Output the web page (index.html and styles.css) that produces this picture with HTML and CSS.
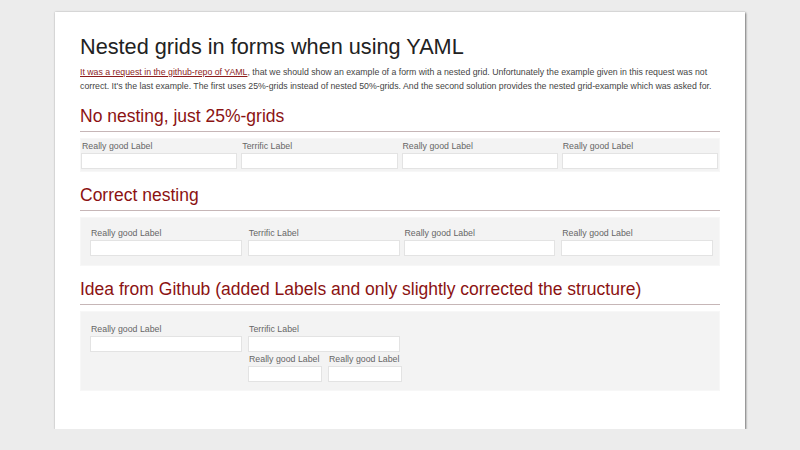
FILE: index.html
```html
<!DOCTYPE html>
<html lang="en">
<head>
<meta charset="utf-8">
<title>Nested grids in forms when using YAML</title>
<link rel="stylesheet" href="styles.css">
</head>
<body>
<div class="page">
  <h1 class="title">Nested grids in forms when using YAML</h1>
  <p class="intro"><a class="intro-link" href="#">It was a request in the github-repo of YAML</a>, that we should show an example of a form with a nested grid. Unfortunately the example given in this request was not correct. It's the last example. The first uses 25%-grids instead of nested 50%-grids. And the second solution provides the nested grid-example which was asked for.</p>

  <h2 class="section-title">No nesting, just 25%-grids</h2>
  <form class="box box-flat">
    <div class="grid-four">
      <div class="field"><label class="field-label" for="a1">Really good Label</label><input class="field-input" id="a1" type="text"></div>
      <div class="field"><label class="field-label" for="a2">Terrific Label</label><input class="field-input" id="a2" type="text"></div>
      <div class="field"><label class="field-label" for="a3">Really good Label</label><input class="field-input" id="a3" type="text"></div>
      <div class="field"><label class="field-label" for="a4">Really good Label</label><input class="field-input" id="a4" type="text"></div>
    </div>
  </form>

  <h2 class="section-title">Correct nesting</h2>
  <form class="box box-nested">
    <div class="grid-halves">
      <div class="grid-inner">
        <div class="field"><label class="field-label" for="b1">Really good Label</label><input class="field-input" id="b1" type="text"></div>
        <div class="field"><label class="field-label" for="b2">Terrific Label</label><input class="field-input" id="b2" type="text"></div>
      </div>
      <div class="grid-inner">
        <div class="field"><label class="field-label" for="b3">Really good Label</label><input class="field-input" id="b3" type="text"></div>
        <div class="field"><label class="field-label" for="b4">Really good Label</label><input class="field-input" id="b4" type="text"></div>
      </div>
    </div>
  </form>

  <h2 class="section-title">Idea from Github (added Labels and only slightly corrected the structure)</h2>
  <form class="box box-idea">
    <div class="grid-idea">
      <div class="field"><label class="field-label" for="c1">Really good Label</label><input class="field-input" id="c1" type="text"></div>
      <div class="field">
        <label class="field-label" for="c2">Terrific Label</label><input class="field-input field-input-wide" id="c2" type="text">
        <div class="grid-sub">
          <div class="field"><label class="field-label" for="c3">Really good Label</label><input class="field-input" id="c3" type="text"></div>
          <div class="field"><label class="field-label" for="c4">Really good Label</label><input class="field-input" id="c4" type="text"></div>
        </div>
      </div>
    </div>
  </form>
</div>
</body>
</html>
```
FILE: styles.css
```css
html, body {
  margin: 0;
  padding: 0;
}

body {
  background: #ececec;
  font-family: "Liberation Sans", Arial, sans-serif;
  color: #444;
}

.page {
  width: 640px;
  margin: 12px auto 0;
  padding: 22px 25px 38px;
  background: #fff;
  box-shadow: 1px 1px 2px rgba(0, 0, 0, 0.45), 0 0 2px rgba(0, 0, 0, 0.2);
}

.title {
  margin: 0;
  font-size: 21.7px;
  line-height: 26px;
  font-weight: normal;
  color: #222;
}

.intro {
  margin: 4.75px 0 0;
  font-size: 8.76px;
  line-height: 14px;
  color: #444;
}

.intro-link {
  color: #8c1d1d;
  text-decoration: underline;
}

.section-title {
  margin: 12.5px 0 6px;
  padding-bottom: 3.5px;
  border-bottom: 1px solid #c6b6b7;
  font-size: 17.5px;
  line-height: 22px;
  font-weight: normal;
  color: #8b1212;
}

.box {
  margin: 0;
  background: #f3f3f3;
  border: 1px solid #f7f7f7;
}

.box-flat {
  padding: 0 1px 2px 0;
}

.box-nested {
  padding: 8px 6px 9px 9px;
}

.box-idea {
  padding: 10px 6px 8px 9px;
}

.grid-four {
  display: grid;
  grid-template-columns: repeat(4, 1fr);
  column-gap: 4px;
}

.grid-halves {
  display: grid;
  grid-template-columns: 1fr 1fr;
  column-gap: 4px;
}

.grid-inner {
  display: grid;
  grid-template-columns: 1fr 1fr;
  column-gap: 6px;
}

.grid-idea {
  display: grid;
  grid-template-columns: 152px 154px;
  column-gap: 6px;
}

.grid-sub {
  display: grid;
  grid-template-columns: 74px 74px;
  column-gap: 6px;
}

.field {
  display: flex;
  flex-direction: column;
  min-width: 0;
}

.field-label {
  display: block;
  padding-left: 1px;
  font-size: 8.8px;
  line-height: 14px;
  color: #666;
  white-space: nowrap;
}

.field-input {
  display: block;
  box-sizing: border-box;
  width: 100%;
  height: 16px;
  margin: 0;
  padding: 0 3px;
  border: 1px solid #e3e3e3;
  border-radius: 0;
  background: #fff;
  font-family: "Liberation Sans", Arial, sans-serif;
  font-size: 9px;
  outline: none;
}

.field-input-wide {
  width: 152px;
}
```
